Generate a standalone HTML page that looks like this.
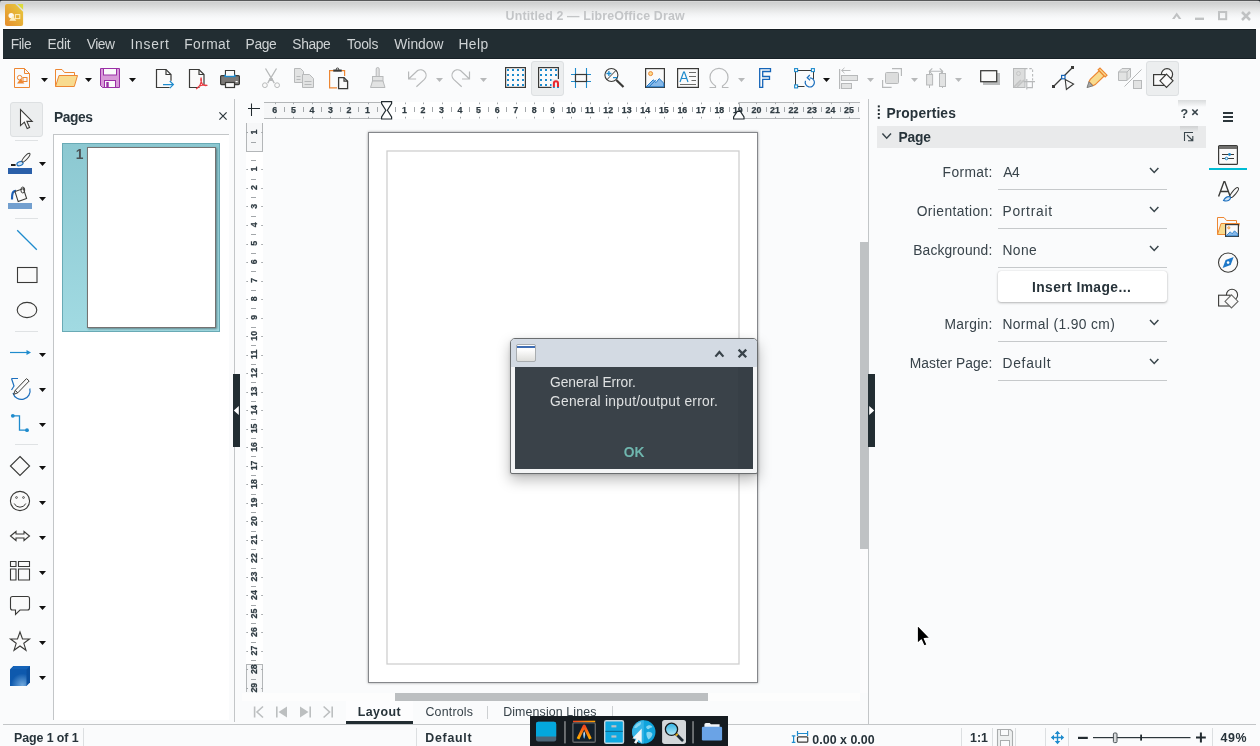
<!DOCTYPE html>
<html lang="en"><head><meta charset="utf-8"><title>Untitled 2 — LibreOffice Draw</title>
<style>
html,body{margin:0;padding:0;}
body{width:1260px;height:746px;overflow:hidden;background:#fafbfc;position:relative;font-family:"Liberation Sans", sans-serif;}
#app{position:absolute;left:0;top:0;width:1260px;height:746px;overflow:hidden;background:#fafbfc;}
#app div{position:absolute;box-sizing:border-box;}
.t{position:absolute;white-space:pre;font-family:"Liberation Sans", sans-serif;}
svg#ov{position:absolute;left:0;top:0;}
svg text{font-family:"Liberation Sans", sans-serif;}
</style></head><body><div id="app">
<div style="left:0px;top:0px;width:1260px;height:30px;background:#20262a;"></div>
<div style="left:0px;top:0px;width:1260px;height:30px;border-radius:3px 3px 0 0;background:linear-gradient(#58595a 0,#58595a 1.300px,#dadada 1px,#cfd0d0 2.500px,#d9dada 6px,#e6e7e7 10px,#f1f2f3 14px,#f8f9fa 18px,#fafbfc 21px,#fafbfc 28px,#ffffff 28px,#ffffff 30px);"></div>
<div style="left:3px;top:29px;width:1253px;height:30px;background:#222d32;"></div>
<div style="left:3px;top:29px;width:1253px;height:1px;background:#161e23;"></div>
<div style="left:3px;top:58px;width:1253px;height:1px;background:#172026;"></div>
<div style="left:3px;top:59px;width:1253px;height:1px;background:#ffffff;"></div>
<div style="left:531px;top:61px;width:33px;height:35px;background:#eceeef;border:1px solid #dde0e2;border-radius:3px;"></div>
<div style="left:1146px;top:61px;width:33px;height:35px;background:#eceeef;border:1px solid #dde0e2;border-radius:3px;"></div>
<div style="left:10px;top:102px;width:33px;height:35px;background:#eceeef;border:1px solid #dde0e2;border-radius:3px;"></div>
<div style="left:15px;top:140px;width:23px;height:1px;background:#dfe2e4;"></div>
<div style="left:15px;top:218px;width:23px;height:1px;background:#dfe2e4;"></div>
<div style="left:15px;top:331px;width:23px;height:1px;background:#dfe2e4;"></div>
<div style="left:15px;top:444px;width:23px;height:1px;background:#dfe2e4;"></div>
<div style="left:8px;top:168px;width:24px;height:6px;background:#2a5fa9;"></div>
<div style="left:8px;top:203px;width:24px;height:6px;background:#729fcf;"></div>
<div style="left:53px;top:134px;width:176px;height:586px;background:#ffffff;border-left:1px solid #c3c6c8;border-top:1px solid #c3c6c8;"></div>
<div style="left:62px;top:143px;width:158px;height:189px;background:linear-gradient(#8cc8d1,#a1dae2);border:1px solid #69aab5;"></div>
<div style="left:87px;top:147px;width:129px;height:181px;background:#ffffff;border:1px solid #757271;box-shadow:1px 1px 2px rgba(0,0,0,.4);"></div>
<div style="left:234px;top:99px;width:1px;height:623px;background:#c3c6c8;"></div>
<div style="left:868px;top:99px;width:1px;height:625px;background:#c3c6c8;"></div>
<div style="left:264px;top:102px;width:122px;height:17px;background:#f6f7f8;border-top:1px solid #b3b6b8;border-bottom:1px solid #b3b6b8;"></div>
<div style="left:386px;top:102px;width:353px;height:17px;background:#ffffff;"></div>
<div style="left:739px;top:102px;width:121px;height:17px;background:#f6f7f8;border-top:1px solid #b3b6b8;border-bottom:1px solid #b3b6b8;border-left:1px solid #b3b6b8;"></div>
<div style="left:246px;top:123px;width:17px;height:29px;background:#f6f7f8;border-left:1px solid #b3b6b8;border-right:1px solid #b3b6b8;border-bottom:1px solid #b3b6b8;"></div>
<div style="left:246px;top:152px;width:17px;height:512px;background:#ffffff;"></div>
<div style="left:246px;top:664px;width:17px;height:28px;background:#f6f7f8;border-left:1px solid #b3b6b8;border-right:1px solid #b3b6b8;border-top:1px solid #b3b6b8;"></div>
<div style="left:368px;top:132px;width:390px;height:551px;background:#ffffff;border:1px solid #85878b;box-shadow:0 0 2.500px rgba(0,0,0,.38);"></div>
<svg style="position:absolute;left:380px;top:145px" width="366" height="526" viewBox="380 145 366 526"><rect x="387" y="151" width="352" height="513" fill="none" stroke="#cfcfcf" stroke-width="1.300"/></svg>
<div style="left:860px;top:99px;width:8px;height:594px;background:#fcfcfd;"></div>
<div style="left:860px;top:242px;width:9px;height:306.5px;background:#bfc2c4;"></div>
<div style="left:242px;top:693px;width:618px;height:8px;background:#fdfdfd;"></div>
<div style="left:395px;top:693px;width:313px;height:8px;background:#bcbfc1;"></div>
<div style="left:346px;top:701px;width:67px;height:23px;background:#fdfdfe;"></div>
<div style="left:346px;top:721px;width:67px;height:3px;background:#222d32;"></div>
<div style="left:487px;top:706px;width:1px;height:13px;background:#cdd0d2;"></div>
<div style="left:612px;top:706px;width:1px;height:13px;background:#cdd0d2;"></div>
<div style="left:3px;top:724px;width:1253px;height:1px;background:#c3c6c8;"></div>
<div style="left:83px;top:728px;width:1px;height:18px;background:#dcdfe1;"></div>
<div style="left:416px;top:728px;width:1px;height:18px;background:#dcdfe1;"></div>
<div style="left:961px;top:728px;width:1px;height:18px;background:#dcdfe1;"></div>
<div style="left:992px;top:728px;width:1px;height:18px;background:#dcdfe1;"></div>
<div style="left:1015px;top:728px;width:1px;height:18px;background:#dcdfe1;"></div>
<div style="left:1045px;top:728px;width:1px;height:18px;background:#dcdfe1;"></div>
<div style="left:1068px;top:728px;width:1px;height:18px;background:#dcdfe1;"></div>
<div style="left:1212px;top:728px;width:1px;height:18px;background:#dcdfe1;"></div>
<div style="left:1178px;top:100px;width:28px;height:7px;background:linear-gradient(#d9dbdc,#fafbfc);"></div>
<div style="left:877px;top:126px;width:329px;height:22px;background:#e9eaeb;"></div>
<div style="left:1180px;top:126px;width:18px;height:6px;background:linear-gradient(#cfd1d2,#e9eaeb);"></div>
<div style="left:998px;top:189px;width:169px;height:1px;background:#c6c9cb;"></div>
<div style="left:998px;top:228px;width:169px;height:1px;background:#c6c9cb;"></div>
<div style="left:998px;top:267px;width:169px;height:1px;background:#c6c9cb;"></div>
<div style="left:998px;top:341px;width:169px;height:1px;background:#c6c9cb;"></div>
<div style="left:998px;top:380px;width:169px;height:1px;background:#c6c9cb;"></div>
<div style="left:998px;top:271px;width:169px;height:31px;background:#ffffff;border-radius:3px;box-shadow:0 1px 2.5px rgba(0,0,0,.28),0 0 1px rgba(0,0,0,.18);"></div>
<div style="left:1209px;top:168px;width:38px;height:2px;background:#00bcd4;"></div>
<div style="left:510px;top:338px;width:248px;height:136px;background:#f4f5f6;border:1px solid #6a6d6f;border-radius:5px 5px 2px 2px;box-shadow:0 6px 14px rgba(0,0,0,.27),0 1px 3px rgba(0,0,0,.14);"></div>
<div style="left:511px;top:339px;width:246px;height:28px;background:#d3dae3;border-radius:4px 4px 0 0;"></div>
<div style="left:515px;top:367px;width:238px;height:102px;background:#3a4249;"></div>
<div style="left:738px;top:367px;width:15px;height:102px;background:#373f46;"></div>
<div style="left:516px;top:344px;width:20px;height:18px;border:1px solid #a9adb0;border-radius:2px;background:linear-gradient(#ffffff 0,#fbfbfb 35%,#dededb 100%);"></div>
<div style="left:517px;top:346px;width:18px;height:2px;background:#3f6db3;"></div>
<div style="left:530px;top:716px;width:198px;height:30px;background:#151b20;"></div>
<div id="fg" style="left:0;top:0;width:1260px;height:746px;will-change:transform;">
<svg id="ov" width="1260" height="746" viewBox="0 0 1260 746">
<g transform="translate(5,4)" ><defs><linearGradient id="lg1" x1="0" y1="1" x2="1" y2="0"><stop offset="0" stop-color="#e58c2c"/><stop offset="1" stop-color="#e8cd3f"/></linearGradient></defs><path d="M2,0 H10.200 L18.100,7.700 V20 a2,2 0 0 1 -2,2 H2 a2,2 0 0 1 -2,-2 V2 a2,2 0 0 1 2,-2z" fill="url(#lg1)"/><path d="M12.200,0 H18.100 V5.800z" fill="#dcdc3c"/><circle cx="6.200" cy="11.600" r="2.700" fill="#fff" opacity=".95"/><path d="M4.300,16.800 l3.500,-5.200 l3.500,5.200z" fill="#fdeec0"/><rect x="10.400" y="10.600" width="4.400" height="4" fill="none" stroke="#fdeec0" stroke-width="1"/></g>
<path d="M1172,19 l4.700,-6.500 l4.700,6.500 h-2.600 l-2.100,-3 l-2.100,3z" fill="#c0c2c3"/>
<rect x="1195" y="17.6" width="9" height="2.4" fill="#c0c2c3"/>
<rect x="1219" y="12" width="7.2" height="7.2" stroke="#c0c2c3" stroke-width="2" fill="none"/>
<path d="M1242,12 l8,8 M1250,12 l-8,8" stroke="#c0c2c3" stroke-width="2.5" fill="none"/>
<g transform="translate(14,68)" ><path d="M0.5,0.5 h10 l5,5 v14 h-15z" stroke="#ed8733" fill="#fafafa" stroke-width="1" /><path d="M10.5,0.5 v5 h5" stroke="#ed8733" fill="none" stroke-width="1" /><circle cx="5.7" cy="9.7" r="2.3" stroke="#ed8733" fill="none"/><rect x="9" y="9.5" width="4" height="4" stroke="#ed8733" fill="#fafafa"/><path d="M3,15.5 l3.7,-5 l3.7,5z" fill="#ed8733"/></g>
<path d="M41,78 h7 l-3.5,4 z" fill="#111"/>
<g transform="translate(55,69)" ><path d="M0.5,17.5 v-17 h6.5 l2.5,3 h10 v3.5" stroke="#ed8733" fill="#fafafa" stroke-width="1" /><path d="M0.5,17.5 l3.5,-11 h18.5 l-3.2,11z" stroke="#ed8733" fill="#f8db8f" stroke-width="1" /></g>
<path d="M85,78 h7 l-3.5,4 z" fill="#111"/>
<g transform="translate(100,68)" ><path d="M0.5,0.5 h19 v19 h-17 l-2,-2z" stroke="#9a30a6" fill="#d89ad8" stroke-width="1" /><rect x="3.5" y="0.5" width="13" height="6.5" fill="#fafafa" stroke="#9a30a6"/><rect x="4.5" y="12.5" width="11" height="7" fill="#fafafa" stroke="#9a30a6"/><rect x="6.3" y="14" width="2.4" height="5.5" fill="#9a30a6"/></g>
<path d="M129,78 h7 l-3.5,4 z" fill="#111"/>
<g transform="translate(156,69)" ><path d="M0.5,0.5 h9.5 l5,5 v13 h-14.5z" stroke="#3a3a38" fill="#fafafa" stroke-width="1.2" /><path d="M10,0.5 v5 h5" stroke="#3a3a38" fill="none" stroke-width="1.2" /><rect x="13.600" y="11.800" width="6" height="8.500" fill="#fafbfc"/><path d="M7,15.6 h10.3 M13.8,12 l3.6,3.6 l-3.6,3.6" stroke="#1e8bcd" fill="none" stroke-width="1.2" /></g>
<g transform="translate(189,69)" ><path d="M0.5,0.5 h9.5 l5,5 v13 h-14.5z" stroke="#3a3a38" fill="#fafafa" stroke-width="1.2" /><path d="M10,0.5 v5 h5" stroke="#3a3a38" fill="none" stroke-width="1.2" /><path d="M9,20.500 l4,-5 l6,1 l-4.500,4z" fill="#fafbfc"/><path d="M12,8.5 c0.8,2.5 0.3,5.5 -1,7.5 c-1,1.8 -2.5,3.2 -4,4 M12,8.5 c-0.6,3 0.3,5.2 1.5,6.6 c1.3,1.4 3,1.8 5,1.2 M7.3,20 c1.5,-2.5 5,-4.5 11,-3.8" stroke="#e8373e" fill="none" stroke-width="1.1" /></g>
<g transform="translate(220,70)" ><rect x="5.5" y="0.6" width="9" height="6" fill="#fafafa" stroke="#3a3a38" stroke-width="1.2"/><rect x="0.6" y="5.6" width="18.8" height="9" rx="1" fill="#7a7876" stroke="#3a3a38" stroke-width="1.2"/><rect x="4.400" y="4.600" width="11.200" height="2.600" fill="#1e8bcd"/><rect x="6" y="1" width="8" height="4.800" fill="#fafafa"/><rect x="5.5" y="12.5" width="9" height="5" fill="#fafafa" stroke="#3a3a38" stroke-width="1.2"/><rect x="15.5" y="11" width="2.2" height="1.2" fill="#fff"/></g>
<g transform="translate(262,68)" ><path d="M3.5,0.5 L12.3,15.2 M14.5,0.5 L5.7,15.2" stroke="#b7b9ba" fill="none" stroke-width="1.3" /><circle cx="2.9" cy="17.2" r="2.4" stroke="#b7b9ba" fill="#fafafa"/><circle cx="15.1" cy="17.2" r="2.4" stroke="#b7b9ba" fill="#fafafa"/><path d="M7.5,10 h3 l1,3 h-5z" fill="#b7b9ba"/></g>
<g transform="translate(294,68)" ><path d="M0.5,0.5 h6 l3,3 v11 h-9z" stroke="#b7b9ba" fill="#e2e3e3" stroke-width="1" /><path d="M2.5,8.5 h4 M2.5,11.5 h4" stroke="#b7b9ba" fill="none" stroke-width="1" /><path d="M8.5,6.5 h7 l4,4 v9 h-11z" stroke="#b7b9ba" fill="#e2e3e3" stroke-width="1" /><path d="M10.5,13.5 h7 M10.5,16.5 h7" stroke="#b7b9ba" fill="none" stroke-width="1" /></g>
<g transform="translate(329,68)" ><path d="M5,2.600 h-4.400 v17.200 h7.400 M12,2.600 h3.600 v5.500" stroke="#ed8733" fill="none" stroke-width="1.2" /><rect x="4.300" y="1.500" width="8.400" height="2.200" fill="#3a3a38"/><circle cx="8.500" cy="1.300" r="1.300" fill="none" stroke="#3a3a38" stroke-width="1"/><path d="M9.6,9.6 h5.4 l3.6,3.6 v7.4 h-9z" stroke="#3a3a38" fill="#fafafa" stroke-width="1.3" /><path d="M15,9.6 v3.6 h3.6" stroke="#3a3a38" fill="none" stroke-width="1.2" /></g>
<g transform="translate(370,67)" ><rect x="6.2" y="0.5" width="3" height="10" rx="1.5" fill="#e2e3e3" stroke="#b7b9ba"/><rect x="2.5" y="9.5" width="10.5" height="4.5" fill="#e2e3e3" stroke="#b7b9ba"/><path d="M2.5,14 L0.5,20.5 h14.5 L13,14z" stroke="#b7b9ba" fill="#e2e3e3" stroke-width="1" /></g>
<path d="M408.6,71.5 v7.5 h7.5 M408.6,79 L417.6,70.6 A5.6,5.6 0 0 1 424.4,79.4 L416.4,86.8" stroke="#b7b9ba" fill="none" stroke-width="1.2" />
<path d="M436,78 h7 l-3.5,4 z" fill="#b7b9ba"/>
<path d="M469.5,71.5 v7.5 h-7.5 M469.5,79 L460.5,70.6 A5.6,5.6 0 0 0 453.7,79.4 L461.7,86.8" stroke="#b7b9ba" fill="none" stroke-width="1.2" />
<path d="M480,78 h7 l-3.5,4 z" fill="#b7b9ba"/>
<g transform="translate(505,67)" ><rect x="0.6" y="0.6" width="19.8" height="19.8" fill="#fafafa" stroke="#3a3a38" stroke-width="1.2"/><rect x="2" y="2" width="2" height="2" fill="#1e8bcd"/><rect x="2" y="7" width="2" height="2" fill="#1e8bcd"/><rect x="2" y="12" width="2" height="2" fill="#1e8bcd"/><rect x="2" y="17" width="2" height="2" fill="#1e8bcd"/><rect x="7" y="2" width="2" height="2" fill="#1e8bcd"/><rect x="7" y="7" width="2" height="2" fill="#1e8bcd"/><rect x="7" y="12" width="2" height="2" fill="#1e8bcd"/><rect x="7" y="17" width="2" height="2" fill="#1e8bcd"/><rect x="12" y="2" width="2" height="2" fill="#1e8bcd"/><rect x="12" y="7" width="2" height="2" fill="#1e8bcd"/><rect x="12" y="12" width="2" height="2" fill="#1e8bcd"/><rect x="12" y="17" width="2" height="2" fill="#1e8bcd"/><rect x="17" y="2" width="2" height="2" fill="#1e8bcd"/><rect x="17" y="7" width="2" height="2" fill="#1e8bcd"/><rect x="17" y="12" width="2" height="2" fill="#1e8bcd"/><rect x="17" y="17" width="2" height="2" fill="#1e8bcd"/></g>
<g transform="translate(538,67)" ><rect x="0.6" y="0.6" width="19.8" height="19.8" fill="#fafafa" stroke="#3a3a38" stroke-width="1.2"/><rect x="2" y="2" width="2" height="2" fill="#1e8bcd"/><rect x="2" y="7" width="2" height="2" fill="#1e8bcd"/><rect x="2" y="12" width="2" height="2" fill="#1e8bcd"/><rect x="2" y="17" width="2" height="2" fill="#1e8bcd"/><rect x="7" y="2" width="2" height="2" fill="#1e8bcd"/><rect x="7" y="7" width="2" height="2" fill="#1e8bcd"/><rect x="7" y="12" width="2" height="2" fill="#1e8bcd"/><rect x="7" y="17" width="2" height="2" fill="#1e8bcd"/><rect x="12" y="2" width="2" height="2" fill="#1e8bcd"/><rect x="12" y="7" width="2" height="2" fill="#1e8bcd"/><rect x="12" y="12" width="2" height="2" fill="#1e8bcd"/><rect x="12" y="17" width="2" height="2" fill="#1e8bcd"/><rect x="17" y="2" width="2" height="2" fill="#1e8bcd"/><rect x="17" y="7" width="2" height="2" fill="#1e8bcd"/><rect x="17" y="12" width="2" height="2" fill="#1e8bcd"/><rect x="17" y="17" width="2" height="2" fill="#1e8bcd"/><rect x="13.5" y="12" width="9" height="10" fill="#eceeef"/><path d="M15.900,20 v-3.600 a2.050,2.050 0 0 1 4.100,0 v3.600" stroke="#e9262d" fill="none" stroke-width="2" /><rect x="14.900" y="20" width="2" height="1" fill="#1e8bcd"/><rect x="19" y="20" width="2" height="1" fill="#1e8bcd"/></g>
<g transform="translate(571,68)" ><path d="M4.5,0 v20 M15.5,0 v20 M0,6.5 h20 M0,13.5 h20" stroke="#1e8bcd" fill="none" stroke-width="1.1" /><rect x="4.5" y="6.5" width="11" height="7" fill="#fafafa" stroke="#3a3a38" stroke-width="1.2"/></g>
<g transform="translate(604,68)" ><circle cx="7.4" cy="7" r="6.5" fill="#fafafa" stroke="#3a3a38" stroke-width="1.1"/><path d="M2.6,12 L12.2,2.2" stroke="#3a3a38" fill="none" stroke-width="1" /><path d="M12.3,12 L19.5,19" stroke="#3a3a38" fill="none" stroke-width="2.2" /><path d="M2.400,5.500 h5 M4.900,3 v5 M9,9.600 h4.400" stroke="#1e8bcd" fill="none" stroke-width="1.3" /></g>
<g transform="translate(645,68)" ><rect x="0.6" y="0.6" width="18.8" height="18.8" fill="#fafafa" stroke="#3a3a38" stroke-width="1.2"/><circle cx="5.6" cy="5.6" r="2" fill="#f8db8f" stroke="#ed8733"/><path d="M1.2,18.8 l7,-7 l2.8,2.8 l3.2,-4 l4.6,4.6 v3.6z" stroke="#1e78c8" fill="#86b8e8" stroke-width="1" /><path d="M4,18.8 l7,-7" stroke="#1e78c8" fill="none" stroke-width="1" /></g>
<g transform="translate(677,68)" ><rect x="0.6" y="0.6" width="20.8" height="18.8" fill="#fafafa" stroke="#3a3a38" stroke-width="1.2"/><path d="M3,14 l3.6,-10 h0.8 l3.6,10 M4.4,10.5 h5.2" stroke="#1e8bcd" fill="none" stroke-width="1.2" /><path d="M12,4.5 h7 M12,8.5 h7 M14.5,12.5 h4.5 M3,16.5 h16" stroke="#6d6d6b" fill="none" stroke-width="1" /></g>
<g transform="translate(709,68)" ><path d="M0.5,19.5 h6 v-1.6 C2.5,15.5 1,12 1,9.3 a9,9 0 0 1 18,0 c0,2.7 -1.5,6.2 -5.5,8.6 v1.6 h6" stroke="#b7b9ba" fill="none" stroke-width="1.2" /></g>
<path d="M738,78 h7 l-3.5,4 z" fill="#b7b9ba"/>
<g transform="translate(759,68)" ><path d="M0.7,0.7 h10.8 v2.8 h-7.8 v5 h6.8 v2.8 h-6.8 v8 h-3z" stroke="#1565b8" fill="#fafafa" stroke-width="1.3" /></g>
<g transform="translate(794,68)" ><path d="M1.500,2.500 h18 v8.500 M1.500,2.500 v16 h9" stroke="#3a3a38" fill="none" stroke-width="1" /><rect x="0.6" y="0.6" width="3" height="3" fill="#fafafa" stroke="#1e8bcd" stroke-width="1.1"/><rect x="17.4" y="0.6" width="3" height="3" fill="#fafafa" stroke="#1e8bcd" stroke-width="1.1"/><rect x="0.600" y="16.900" width="3" height="3" fill="#fafafa" stroke="#1e8bcd" stroke-width="1.100"/><path d="M15.8,9.8 a4.6,4.6 0 1 1 -4.3,3 M15.8,7 l-2.6,2.8 l2.9,2.4" stroke="#1c6fbe" fill="none" stroke-width="1.2" /></g>
<path d="M823,78 h7 l-3.5,4 z" fill="#111"/>
<g transform="translate(839,67)" ><path d="M0.6,2 v20" stroke="#b7b9ba" fill="none" stroke-width="1.2" /><path d="M11.5,3.5 h-9 M5.5,0.8 l-2.8,2.7 l2.8,2.7" stroke="#b7b9ba" fill="none" stroke-width="1" /><rect x="2.5" y="8.5" width="16" height="5" fill="#e2e3e3" stroke="#b7b9ba"/><rect x="2.5" y="16.5" width="10" height="5" fill="#e2e3e3" stroke="#b7b9ba"/></g>
<path d="M867,78 h7 l-3.5,4 z" fill="#b7b9ba"/>
<g transform="translate(882,68)" ><path d="M10,0.6 h9.4 v7.4 M0.6,12 v7.4 h9" stroke="#b7b9ba" fill="none" stroke-width="1.2" /><rect x="3.5" y="4.5" width="13" height="11" rx="1" fill="#dcdddd" stroke="#b7b9ba"/></g>
<path d="M911,78 h7 l-3.5,4 z" fill="#b7b9ba"/>
<g transform="translate(926,68)" ><path d="M3.500,3.300 h13 M6.300,0.300 l-3,3 l3,3 M13.700,0.300 l3,3 l-3,3" stroke="#b7b9ba" fill="none" stroke-width="1.1" /><rect x="0.6" y="6.5" width="6" height="10.5" fill="#e2e3e3" stroke="#b7b9ba"/><rect x="13.5" y="5.5" width="6" height="13" fill="#e2e3e3" stroke="#b7b9ba"/><path d="M3.5,3 v3.5 M3.5,17 v3 M16.5,3 v2.5 M16.5,18.5 v1.5" stroke="#b7b9ba" fill="none" stroke-width="1" /></g>
<path d="M955,78 h7 l-3.5,4 z" fill="#b7b9ba"/>
<g transform="translate(980,70)" ><rect x="3" y="3" width="17" height="12" fill="#b9bbbc"/><rect x="0.700" y="0.700" width="16" height="11" fill="#fafafa" stroke="#3a3a38" stroke-width="1.250"/></g>
<g transform="translate(1013,68)" ><rect x="0.5" y="0.5" width="11.5" height="19" fill="#dcdddd" stroke="#b7b9ba"/><circle cx="5.5" cy="5.5" r="2" fill="none" stroke="#c6c7c7"/><path d="M1,19 l7,-7 M4,19 l7,-7" stroke="#c2c3c3" fill="none" stroke-width="1.6" /><path d="M12,0.6 h7.6 v12" stroke="#b7b9ba" fill="none" stroke-width="1.1" stroke-dasharray="2.5 1.8"/><path d="M13.800,11 v10.400 M10.500,13.600 h11.500 M13.800,19.600 h5.600 v-6" stroke="#b7b9ba" fill="none" stroke-width="1.1" /></g>
<path d="M1053.5,86.5 L1072.5,67.5" stroke="#3a3a38" fill="none" stroke-width="1.2" />
<rect x="1052" y="85" width="3" height="3" fill="#3a3a38"/><rect x="1071" y="66" width="3" height="3" fill="#3a3a38"/>
<rect x="1061.6" y="75.4" width="3.4" height="3.4" fill="#fafafa" stroke="#1565b8" stroke-width="1.2"/>
<path d="M1065.2,79.5 L1073.6,84 L1066.4,89.5z" stroke="#3a3a38" fill="#fafafa" stroke-width="1.1" />
<path d="M1088.990,81.770 L1090.230,79.440 L1099.190,70.730 L1104.210,75.890 L1095.250,84.600 L1092.890,85.770z" stroke="#ed8733" fill="#f8db8f" stroke-width="1.2" /><path d="M1098.210,69.720 L1100,67.980 L1106.980,75.160 L1105.190,76.900z" stroke="#ed8733" fill="#f8db8f" stroke-width="1.2" /><path d="M1087,87.600 L1088.990,81.770 L1092.890,85.770z" stroke="#7c7c7a" fill="#a9a9a7" stroke-width="1" />
<g transform="translate(1118,67)" ><path d="M0.5,5 l3.5,-3.5 h8.5 v8.5 l-3.5,3.5 h-8.5z" stroke="#b7b9ba" fill="#e2e3e3" stroke-width="1" /><path d="M0.5,5 h8.5 v8.5 M9,5 l3.5,-3.5" stroke="#b7b9ba" fill="none" stroke-width="1" /><path d="M6.5,19.5 L23.5,2.5" stroke="#b7b9ba" fill="none" stroke-width="1" /><rect x="15.5" y="13.5" width="8" height="8" fill="#e2e3e3" stroke="#b7b9ba"/></g>
<g transform="translate(1153,68)" ><circle cx="14" cy="6.3" r="5.6" fill="#fafafa" stroke="#3a3a38" stroke-width="1.2"/><rect x="0.6" y="6.6" width="11.5" height="10.8" fill="#fafafa" stroke="#3a3a38" stroke-width="1.2"/><path d="M13.5,6.2 L20,12.8 L13.5,19.4 L7,12.8z" stroke="#3a3a38" fill="#fafafa" stroke-width="1.2" /></g>
<path d="M20.5,109.6 V125.6 L24.4,122.2 L27.2,128.6 L29.6,127.5 L26.9,121.4 H32.2z" stroke="#3a3a38" fill="#fafafa" stroke-width="1.1" />
<rect x="11" y="164" width="4.6" height="2" fill="#222"/>
<ellipse cx="20" cy="163.6" rx="3.2" ry="2" fill="#cfe3f5" stroke="#1c6fbe" stroke-width="1.1" transform="rotate(-20 20 163.6)"/>
<ellipse cx="26" cy="157.6" rx="5.6" ry="1.7" fill="#fafafa" stroke="#3a3a38" stroke-width="1" transform="rotate(-48 26 157.6)"/>
<path d="M39,162 h7 l-3.5,4 z" fill="#111"/>
<path d="M12,199.5 c0,-5.5 0.3,-8.6 4,-8.6" stroke="#1c5fb5" fill="none" stroke-width="2.2" />
<path d="M15,191.6 L23.4,188.6 L26.6,198.4 L18.2,201.6z" stroke="#3a3a38" fill="#fafafa" stroke-width="1.1" />
<ellipse cx="22.800" cy="190" rx="1.900" ry="3" fill="none" stroke="#3a3a38" stroke-width="1"/>
<path d="M39,197 h7 l-3.5,4 z" fill="#111"/>
<path d="M17.2,230.2 L36.8,249.8" stroke="#1e8bcd" fill="none" stroke-width="1.3" />
<rect x="17.5" y="267.5" width="19.5" height="15" fill="#fafafa" stroke="#3a3a38" stroke-width="1.1"/>
<ellipse cx="27" cy="310" rx="9.8" ry="7.6" fill="#fafafa" stroke="#3a3a38" stroke-width="1.1"/>
<path d="M10,352.5 h18" stroke="#1e8bcd" fill="none" stroke-width="1.2" /><path d="M26.5,350 l4.5,2.5 l-4.5,2.5z" fill="#1e8bcd"/>
<path d="M39,353 h7 l-3.5,4 z" fill="#111"/>
<path d="M11.5,378.5 h6.5 M11.5,378.5 l2.5,7.5 l-2.5,4 M13,393 a8,8 0 0 0 16.8,-4.5" stroke="#1c6fbe" fill="none" stroke-width="1.2" />
<path d="M13.600,394.400 L15.200,390.400 L26.500,378.600 L29.200,381 L17.800,392.800z M15.200,390.400 l2.600,2.400" stroke="#3a3a38" fill="#fafafa" stroke-width="1" />
<path d="M39,388 h7 l-3.5,4 z" fill="#111"/>
<path d="M12.8,415.8 h6.7 v14.4 h7.5" stroke="#1e8bcd" fill="none" stroke-width="1.3" /><circle cx="12.8" cy="415.8" r="1.9" fill="#1e8bcd"/><circle cx="27" cy="430.2" r="1.9" fill="#1e8bcd"/>
<path d="M39,423 h7 l-3.5,4 z" fill="#111"/>
<path d="M20,456.5 L29.6,466 L20,475.5 L10.4,466z" stroke="#3a3a38" fill="#fafafa" stroke-width="1.1" />
<path d="M39,466 h7 l-3.5,4 z" fill="#111"/>
<circle cx="20" cy="501" r="9.6" fill="#fafafa" stroke="#3a3a38" stroke-width="1.1"/><circle cx="16.5" cy="497.5" r="0.9" fill="none" stroke="#3a3a38" stroke-width=".8"/><circle cx="23.5" cy="497.5" r="0.9" fill="none" stroke="#3a3a38" stroke-width=".8"/><path d="M14.2,503.5 a6.4,6.4 0 0 0 11.6,0" stroke="#3a3a38" fill="none" stroke-width="1" />
<path d="M39,501 h7 l-3.5,4 z" fill="#111"/>
<path d="M10.5,536 L16,531.5 V534 H24 V531.5 L29.5,536 L24,540.5 V538 H16 V540.5z" stroke="#3a3a38" fill="#fafafa" stroke-width="1.1" />
<path d="M39,536 h7 l-3.5,4 z" fill="#111"/>
<path d="M10.5,561.5 h5.5 v5 h-5.5z M18.5,561.5 h11 v5 h-11z M10.5,569 h5.5 v11 h-5.5z M18.5,569 h11 v11 h-11z" stroke="#3a3a38" fill="#fafafa" stroke-width="1.1" />
<path d="M39,571 h7 l-3.5,4 z" fill="#111"/>
<path d="M12.5,596.5 h15 a2,2 0 0 1 2,2 v9.500 a2,2 0 0 1 -2,2 h-7.5 l-4.500,4.500 v-4.500 h-3 a2,2 0 0 1 -2,-2 v-9.500 a2,2 0 0 1 2,-2z" stroke="#3a3a38" fill="#fafafa" stroke-width="1.1" />
<path d="M39,606 h7 l-3.5,4 z" fill="#111"/>
<path d="M20,632 l2.5,7 h7 l-5.700,4.300 l2.200,7 l-6,-4.300 l-6,4.300 l2.200,-7 l-5.700,-4.300 h7z" stroke="#3a3a38" fill="#fafafa" stroke-width="1.1" />
<path d="M39,641 h7 l-3.5,4 z" fill="#111"/>
<defs><radialGradient id="rg1" cx=".75" cy=".95" r=".7"><stop offset="0" stop-color="#6fa8dd"/><stop offset="1" stop-color="#0e59ad"/></radialGradient></defs><path d="M10,669.5 l3.500,-3.500 h16.500 v16.500 l-3.500,3.500 h-16.500z" fill="#0b4f9e"/><path d="M10,669.500 h16.500 v16.500 h-16.500z" fill="url(#rg1)"/><path d="M10,669.500 l3.500,-3.500 h16.500 l-3.500,3.500z" fill="#1563b8"/>
<path d="M39,676 h7 l-3.5,4 z" fill="#111"/>
<path d="M219.4,112.4 l7.200,7.200 M226.600,112.400 l-7.200,7.200" stroke="#2c363b" fill="none" stroke-width="1.2" />
<rect x="233" y="374" width="7" height="73" fill="#222d32"/><path d="M238.800,406 v9 l-5,-4.500z" fill="#fff"/>
<rect x="868" y="374" width="7" height="73" fill="#222d32"/><path d="M869.200,406 v9 l5,-4.500z" fill="#fff"/>
<path d="M248,108.500 h12 M251.500,103.500 v12.500" stroke="#222b30" fill="none" stroke-width="1.05" />
<text x="274.8" y="113" text-anchor="middle" font-size="8.8" font-weight="700" fill="#2f3b42" stroke="#2f3b42" stroke-width=".25">6</text><path d="M275.5,102.500 v1.700 M275.5,116.800 v1.700" stroke="#a3a7aa" stroke-width="1"/><path d="M284.5,107 v5" stroke="#a3a7aa" stroke-width="1"/><text x="293.4" y="113" text-anchor="middle" font-size="8.8" font-weight="700" fill="#2f3b42" stroke="#2f3b42" stroke-width=".25">5</text><path d="M293.5,102.500 v1.700 M293.5,116.800 v1.700" stroke="#a3a7aa" stroke-width="1"/><path d="M303.5,107 v5" stroke="#a3a7aa" stroke-width="1"/><text x="311.9" y="113" text-anchor="middle" font-size="8.8" font-weight="700" fill="#2f3b42" stroke="#2f3b42" stroke-width=".25">4</text><path d="M312.5,102.500 v1.700 M312.5,116.800 v1.700" stroke="#a3a7aa" stroke-width="1"/><path d="M321.5,107 v5" stroke="#a3a7aa" stroke-width="1"/><text x="330.4" y="113" text-anchor="middle" font-size="8.8" font-weight="700" fill="#2f3b42" stroke="#2f3b42" stroke-width=".25">3</text><path d="M330.5,102.500 v1.700 M330.5,116.800 v1.700" stroke="#a3a7aa" stroke-width="1"/><path d="M340.5,107 v5" stroke="#a3a7aa" stroke-width="1"/><text x="348.9" y="113" text-anchor="middle" font-size="8.8" font-weight="700" fill="#2f3b42" stroke="#2f3b42" stroke-width=".25">2</text><path d="M349.5,102.500 v1.700 M349.5,116.800 v1.700" stroke="#a3a7aa" stroke-width="1"/><path d="M358.5,107 v5" stroke="#a3a7aa" stroke-width="1"/><text x="367.4" y="113" text-anchor="middle" font-size="8.8" font-weight="700" fill="#2f3b42" stroke="#2f3b42" stroke-width=".25">1</text><path d="M368.5,102.500 v1.700 M368.5,116.800 v1.700" stroke="#a3a7aa" stroke-width="1"/><path d="M377.5,107 v5" stroke="#a3a7aa" stroke-width="1"/><path d="M395.5,107 v5" stroke="#a3a7aa" stroke-width="1"/><text x="404.5" y="113" text-anchor="middle" font-size="8.8" font-weight="700" fill="#2f3b42" stroke="#2f3b42" stroke-width=".25">1</text><path d="M405.5,102.500 v1.700 M405.5,116.800 v1.700" stroke="#a3a7aa" stroke-width="1"/><path d="M414.5,107 v5" stroke="#a3a7aa" stroke-width="1"/><text x="423.0" y="113" text-anchor="middle" font-size="8.8" font-weight="700" fill="#2f3b42" stroke="#2f3b42" stroke-width=".25">2</text><path d="M423.5,102.500 v1.700 M423.5,116.800 v1.700" stroke="#a3a7aa" stroke-width="1"/><path d="M432.5,107 v5" stroke="#a3a7aa" stroke-width="1"/><text x="441.5" y="113" text-anchor="middle" font-size="8.8" font-weight="700" fill="#2f3b42" stroke="#2f3b42" stroke-width=".25">3</text><path d="M442.5,102.500 v1.700 M442.5,116.800 v1.700" stroke="#a3a7aa" stroke-width="1"/><path d="M451.5,107 v5" stroke="#a3a7aa" stroke-width="1"/><text x="460.0" y="113" text-anchor="middle" font-size="8.8" font-weight="700" fill="#2f3b42" stroke="#2f3b42" stroke-width=".25">4</text><path d="M460.5,102.500 v1.700 M460.5,116.800 v1.700" stroke="#a3a7aa" stroke-width="1"/><path d="M469.5,107 v5" stroke="#a3a7aa" stroke-width="1"/><text x="478.5" y="113" text-anchor="middle" font-size="8.8" font-weight="700" fill="#2f3b42" stroke="#2f3b42" stroke-width=".25">5</text><path d="M479.5,102.500 v1.700 M479.5,116.800 v1.700" stroke="#a3a7aa" stroke-width="1"/><path d="M488.5,107 v5" stroke="#a3a7aa" stroke-width="1"/><text x="497.1" y="113" text-anchor="middle" font-size="8.8" font-weight="700" fill="#2f3b42" stroke="#2f3b42" stroke-width=".25">6</text><path d="M497.5,102.500 v1.700 M497.5,116.800 v1.700" stroke="#a3a7aa" stroke-width="1"/><path d="M506.5,107 v5" stroke="#a3a7aa" stroke-width="1"/><text x="515.6" y="113" text-anchor="middle" font-size="8.8" font-weight="700" fill="#2f3b42" stroke="#2f3b42" stroke-width=".25">7</text><path d="M516.5,102.500 v1.700 M516.5,116.800 v1.700" stroke="#a3a7aa" stroke-width="1"/><path d="M525.5,107 v5" stroke="#a3a7aa" stroke-width="1"/><text x="534.1" y="113" text-anchor="middle" font-size="8.8" font-weight="700" fill="#2f3b42" stroke="#2f3b42" stroke-width=".25">8</text><path d="M534.5,102.500 v1.700 M534.5,116.800 v1.700" stroke="#a3a7aa" stroke-width="1"/><path d="M543.5,107 v5" stroke="#a3a7aa" stroke-width="1"/><text x="552.6" y="113" text-anchor="middle" font-size="8.8" font-weight="700" fill="#2f3b42" stroke="#2f3b42" stroke-width=".25">9</text><path d="M553.5,102.500 v1.700 M553.5,116.800 v1.700" stroke="#a3a7aa" stroke-width="1"/><path d="M562.5,107 v5" stroke="#a3a7aa" stroke-width="1"/><text x="571.1" y="113" text-anchor="middle" font-size="8.8" font-weight="700" fill="#2f3b42" stroke="#2f3b42" stroke-width=".25">10</text><path d="M571.5,102.500 v1.700 M571.5,116.800 v1.700" stroke="#a3a7aa" stroke-width="1"/><path d="M581.5,107 v5" stroke="#a3a7aa" stroke-width="1"/><text x="589.7" y="113" text-anchor="middle" font-size="8.8" font-weight="700" fill="#2f3b42" stroke="#2f3b42" stroke-width=".25">11</text><path d="M590.5,102.500 v1.700 M590.5,116.800 v1.700" stroke="#a3a7aa" stroke-width="1"/><path d="M599.5,107 v5" stroke="#a3a7aa" stroke-width="1"/><text x="608.2" y="113" text-anchor="middle" font-size="8.8" font-weight="700" fill="#2f3b42" stroke="#2f3b42" stroke-width=".25">12</text><path d="M608.5,102.500 v1.700 M608.5,116.800 v1.700" stroke="#a3a7aa" stroke-width="1"/><path d="M618.5,107 v5" stroke="#a3a7aa" stroke-width="1"/><text x="626.7" y="113" text-anchor="middle" font-size="8.8" font-weight="700" fill="#2f3b42" stroke="#2f3b42" stroke-width=".25">13</text><path d="M627.5,102.500 v1.700 M627.5,116.800 v1.700" stroke="#a3a7aa" stroke-width="1"/><path d="M636.5,107 v5" stroke="#a3a7aa" stroke-width="1"/><text x="645.2" y="113" text-anchor="middle" font-size="8.8" font-weight="700" fill="#2f3b42" stroke="#2f3b42" stroke-width=".25">14</text><path d="M645.5,102.500 v1.700 M645.5,116.800 v1.700" stroke="#a3a7aa" stroke-width="1"/><path d="M655.5,107 v5" stroke="#a3a7aa" stroke-width="1"/><text x="663.8" y="113" text-anchor="middle" font-size="8.8" font-weight="700" fill="#2f3b42" stroke="#2f3b42" stroke-width=".25">15</text><path d="M664.5,102.500 v1.700 M664.5,116.800 v1.700" stroke="#a3a7aa" stroke-width="1"/><path d="M673.5,107 v5" stroke="#a3a7aa" stroke-width="1"/><text x="682.3" y="113" text-anchor="middle" font-size="8.8" font-weight="700" fill="#2f3b42" stroke="#2f3b42" stroke-width=".25">16</text><path d="M682.5,102.500 v1.700 M682.5,116.800 v1.700" stroke="#a3a7aa" stroke-width="1"/><path d="M692.5,107 v5" stroke="#a3a7aa" stroke-width="1"/><text x="700.8" y="113" text-anchor="middle" font-size="8.8" font-weight="700" fill="#2f3b42" stroke="#2f3b42" stroke-width=".25">17</text><path d="M701.5,102.500 v1.700 M701.5,116.800 v1.700" stroke="#a3a7aa" stroke-width="1"/><path d="M710.5,107 v5" stroke="#a3a7aa" stroke-width="1"/><text x="719.3" y="113" text-anchor="middle" font-size="8.8" font-weight="700" fill="#2f3b42" stroke="#2f3b42" stroke-width=".25">18</text><path d="M719.5,102.500 v1.700 M719.5,116.800 v1.700" stroke="#a3a7aa" stroke-width="1"/><path d="M729.5,107 v5" stroke="#a3a7aa" stroke-width="1"/><text x="737.8" y="113" text-anchor="middle" font-size="8.8" font-weight="700" fill="#2f3b42" stroke="#2f3b42" stroke-width=".25">19</text><path d="M738.5,102.500 v1.700 M738.5,116.800 v1.700" stroke="#a3a7aa" stroke-width="1"/><path d="M747.5,107 v5" stroke="#a3a7aa" stroke-width="1"/><text x="756.4" y="113" text-anchor="middle" font-size="8.8" font-weight="700" fill="#2f3b42" stroke="#2f3b42" stroke-width=".25">20</text><path d="M756.5,102.500 v1.700 M756.5,116.800 v1.700" stroke="#a3a7aa" stroke-width="1"/><path d="M766.5,107 v5" stroke="#a3a7aa" stroke-width="1"/><text x="774.9" y="113" text-anchor="middle" font-size="8.8" font-weight="700" fill="#2f3b42" stroke="#2f3b42" stroke-width=".25">21</text><path d="M775.5,102.500 v1.700 M775.5,116.800 v1.700" stroke="#a3a7aa" stroke-width="1"/><path d="M784.5,107 v5" stroke="#a3a7aa" stroke-width="1"/><text x="793.4" y="113" text-anchor="middle" font-size="8.8" font-weight="700" fill="#2f3b42" stroke="#2f3b42" stroke-width=".25">22</text><path d="M793.5,102.500 v1.700 M793.5,116.800 v1.700" stroke="#a3a7aa" stroke-width="1"/><path d="M803.5,107 v5" stroke="#a3a7aa" stroke-width="1"/><text x="811.9" y="113" text-anchor="middle" font-size="8.8" font-weight="700" fill="#2f3b42" stroke="#2f3b42" stroke-width=".25">23</text><path d="M812.5,102.500 v1.700 M812.5,116.800 v1.700" stroke="#a3a7aa" stroke-width="1"/><path d="M821.5,107 v5" stroke="#a3a7aa" stroke-width="1"/><text x="830.4" y="113" text-anchor="middle" font-size="8.8" font-weight="700" fill="#2f3b42" stroke="#2f3b42" stroke-width=".25">24</text><path d="M831.5,102.500 v1.700 M831.5,116.800 v1.700" stroke="#a3a7aa" stroke-width="1"/><path d="M840.5,107 v5" stroke="#a3a7aa" stroke-width="1"/><text x="848.9" y="113" text-anchor="middle" font-size="8.8" font-weight="700" fill="#2f3b42" stroke="#2f3b42" stroke-width=".25">25</text><path d="M849.5,102.500 v1.700 M849.5,116.800 v1.700" stroke="#a3a7aa" stroke-width="1"/><path d="M858.5,107 v5" stroke="#a3a7aa" stroke-width="1"/>
<path d="M381.600,101.600 h10 v2 l-4.200,6.700 l4.200,6.700 v2 h-10 v-2 l4.200,-6.700 l-4.200,-6.700z" stroke="#222b30" fill="#ffffff" stroke-width="1.2" />
<path d="M733.600,119 v-2 l3.600,-5.600 h3.200 l3.600,5.600 v2z" stroke="#222b30" fill="#ffffff" stroke-width="1.2" />
<text transform="translate(257.200,132.1) rotate(-90)" text-anchor="middle" font-size="8.8" font-weight="700" fill="#2f3b42" stroke="#2f3b42" stroke-width=".25">1</text><path d="M246.300,132.5 h1.700 M261.200,132.5 h1.700" stroke="#a3a7aa" stroke-width="1"/><path d="M251,142.5 h5" stroke="#a3a7aa" stroke-width="1"/><path d="M251,160.5 h5" stroke="#a3a7aa" stroke-width="1"/><text transform="translate(257.200,169.1) rotate(-90)" text-anchor="middle" font-size="8.8" font-weight="700" fill="#2f3b42" stroke="#2f3b42" stroke-width=".25">1</text><path d="M246.300,169.5 h1.700 M261.200,169.5 h1.700" stroke="#a3a7aa" stroke-width="1"/><path d="M251,179.5 h5" stroke="#a3a7aa" stroke-width="1"/><text transform="translate(257.200,187.6) rotate(-90)" text-anchor="middle" font-size="8.8" font-weight="700" fill="#2f3b42" stroke="#2f3b42" stroke-width=".25">2</text><path d="M246.300,188.5 h1.700 M261.200,188.5 h1.700" stroke="#a3a7aa" stroke-width="1"/><path d="M251,197.5 h5" stroke="#a3a7aa" stroke-width="1"/><text transform="translate(257.200,206.2) rotate(-90)" text-anchor="middle" font-size="8.8" font-weight="700" fill="#2f3b42" stroke="#2f3b42" stroke-width=".25">3</text><path d="M246.300,206.5 h1.700 M261.200,206.5 h1.700" stroke="#a3a7aa" stroke-width="1"/><path d="M251,216.5 h5" stroke="#a3a7aa" stroke-width="1"/><text transform="translate(257.200,224.7) rotate(-90)" text-anchor="middle" font-size="8.8" font-weight="700" fill="#2f3b42" stroke="#2f3b42" stroke-width=".25">4</text><path d="M246.300,225.5 h1.700 M261.200,225.5 h1.700" stroke="#a3a7aa" stroke-width="1"/><path d="M251,234.5 h5" stroke="#a3a7aa" stroke-width="1"/><text transform="translate(257.200,243.2) rotate(-90)" text-anchor="middle" font-size="8.8" font-weight="700" fill="#2f3b42" stroke="#2f3b42" stroke-width=".25">5</text><path d="M246.300,244.5 h1.700 M261.200,244.5 h1.700" stroke="#a3a7aa" stroke-width="1"/><path d="M251,253.5 h5" stroke="#a3a7aa" stroke-width="1"/><text transform="translate(257.200,261.7) rotate(-90)" text-anchor="middle" font-size="8.8" font-weight="700" fill="#2f3b42" stroke="#2f3b42" stroke-width=".25">6</text><path d="M246.300,262.5 h1.700 M261.200,262.5 h1.700" stroke="#a3a7aa" stroke-width="1"/><path d="M251,271.5 h5" stroke="#a3a7aa" stroke-width="1"/><text transform="translate(257.200,280.2) rotate(-90)" text-anchor="middle" font-size="8.8" font-weight="700" fill="#2f3b42" stroke="#2f3b42" stroke-width=".25">7</text><path d="M246.300,281.5 h1.700 M261.200,281.5 h1.700" stroke="#a3a7aa" stroke-width="1"/><path d="M251,290.5 h5" stroke="#a3a7aa" stroke-width="1"/><text transform="translate(257.200,298.8) rotate(-90)" text-anchor="middle" font-size="8.8" font-weight="700" fill="#2f3b42" stroke="#2f3b42" stroke-width=".25">8</text><path d="M246.300,299.5 h1.700 M261.200,299.5 h1.700" stroke="#a3a7aa" stroke-width="1"/><path d="M251,308.5 h5" stroke="#a3a7aa" stroke-width="1"/><text transform="translate(257.200,317.3) rotate(-90)" text-anchor="middle" font-size="8.8" font-weight="700" fill="#2f3b42" stroke="#2f3b42" stroke-width=".25">9</text><path d="M246.300,318.5 h1.700 M261.200,318.5 h1.700" stroke="#a3a7aa" stroke-width="1"/><path d="M251,327.5 h5" stroke="#a3a7aa" stroke-width="1"/><text transform="translate(257.200,335.8) rotate(-90)" text-anchor="middle" font-size="8.8" font-weight="700" fill="#2f3b42" stroke="#2f3b42" stroke-width=".25">10</text><path d="M246.300,336.5 h1.700 M261.200,336.5 h1.700" stroke="#a3a7aa" stroke-width="1"/><path d="M251,345.5 h5" stroke="#a3a7aa" stroke-width="1"/><text transform="translate(257.200,354.3) rotate(-90)" text-anchor="middle" font-size="8.8" font-weight="700" fill="#2f3b42" stroke="#2f3b42" stroke-width=".25">11</text><path d="M246.300,355.5 h1.700 M261.200,355.5 h1.700" stroke="#a3a7aa" stroke-width="1"/><path d="M251,364.5 h5" stroke="#a3a7aa" stroke-width="1"/><text transform="translate(257.200,372.8) rotate(-90)" text-anchor="middle" font-size="8.8" font-weight="700" fill="#2f3b42" stroke="#2f3b42" stroke-width=".25">12</text><path d="M246.300,373.5 h1.700 M261.200,373.5 h1.700" stroke="#a3a7aa" stroke-width="1"/><path d="M251,382.5 h5" stroke="#a3a7aa" stroke-width="1"/><text transform="translate(257.200,391.4) rotate(-90)" text-anchor="middle" font-size="8.8" font-weight="700" fill="#2f3b42" stroke="#2f3b42" stroke-width=".25">13</text><path d="M246.300,392.5 h1.700 M261.200,392.5 h1.700" stroke="#a3a7aa" stroke-width="1"/><path d="M251,401.5 h5" stroke="#a3a7aa" stroke-width="1"/><text transform="translate(257.200,409.9) rotate(-90)" text-anchor="middle" font-size="8.8" font-weight="700" fill="#2f3b42" stroke="#2f3b42" stroke-width=".25">14</text><path d="M246.300,410.5 h1.700 M261.200,410.5 h1.700" stroke="#a3a7aa" stroke-width="1"/><path d="M251,419.5 h5" stroke="#a3a7aa" stroke-width="1"/><text transform="translate(257.200,428.4) rotate(-90)" text-anchor="middle" font-size="8.8" font-weight="700" fill="#2f3b42" stroke="#2f3b42" stroke-width=".25">15</text><path d="M246.300,429.5 h1.700 M261.200,429.5 h1.700" stroke="#a3a7aa" stroke-width="1"/><path d="M251,438.5 h5" stroke="#a3a7aa" stroke-width="1"/><text transform="translate(257.200,446.9) rotate(-90)" text-anchor="middle" font-size="8.8" font-weight="700" fill="#2f3b42" stroke="#2f3b42" stroke-width=".25">16</text><path d="M246.300,447.5 h1.700 M261.200,447.5 h1.700" stroke="#a3a7aa" stroke-width="1"/><path d="M251,456.5 h5" stroke="#a3a7aa" stroke-width="1"/><text transform="translate(257.200,465.4) rotate(-90)" text-anchor="middle" font-size="8.8" font-weight="700" fill="#2f3b42" stroke="#2f3b42" stroke-width=".25">17</text><path d="M246.300,466.5 h1.700 M261.200,466.5 h1.700" stroke="#a3a7aa" stroke-width="1"/><path d="M251,475.5 h5" stroke="#a3a7aa" stroke-width="1"/><text transform="translate(257.200,484.0) rotate(-90)" text-anchor="middle" font-size="8.8" font-weight="700" fill="#2f3b42" stroke="#2f3b42" stroke-width=".25">18</text><path d="M246.300,484.5 h1.700 M261.200,484.5 h1.700" stroke="#a3a7aa" stroke-width="1"/><path d="M251,494.5 h5" stroke="#a3a7aa" stroke-width="1"/><text transform="translate(257.200,502.5) rotate(-90)" text-anchor="middle" font-size="8.8" font-weight="700" fill="#2f3b42" stroke="#2f3b42" stroke-width=".25">19</text><path d="M246.300,503.5 h1.700 M261.200,503.5 h1.700" stroke="#a3a7aa" stroke-width="1"/><path d="M251,512.5 h5" stroke="#a3a7aa" stroke-width="1"/><text transform="translate(257.200,521.0) rotate(-90)" text-anchor="middle" font-size="8.8" font-weight="700" fill="#2f3b42" stroke="#2f3b42" stroke-width=".25">20</text><path d="M246.300,521.5 h1.700 M261.200,521.5 h1.700" stroke="#a3a7aa" stroke-width="1"/><path d="M251,531.5 h5" stroke="#a3a7aa" stroke-width="1"/><text transform="translate(257.200,539.5) rotate(-90)" text-anchor="middle" font-size="8.8" font-weight="700" fill="#2f3b42" stroke="#2f3b42" stroke-width=".25">21</text><path d="M246.300,540.5 h1.700 M261.200,540.5 h1.700" stroke="#a3a7aa" stroke-width="1"/><path d="M251,549.5 h5" stroke="#a3a7aa" stroke-width="1"/><text transform="translate(257.200,558.0) rotate(-90)" text-anchor="middle" font-size="8.8" font-weight="700" fill="#2f3b42" stroke="#2f3b42" stroke-width=".25">22</text><path d="M246.300,558.5 h1.700 M261.200,558.5 h1.700" stroke="#a3a7aa" stroke-width="1"/><path d="M251,568.5 h5" stroke="#a3a7aa" stroke-width="1"/><text transform="translate(257.200,576.6) rotate(-90)" text-anchor="middle" font-size="8.8" font-weight="700" fill="#2f3b42" stroke="#2f3b42" stroke-width=".25">23</text><path d="M246.300,577.5 h1.700 M261.200,577.5 h1.700" stroke="#a3a7aa" stroke-width="1"/><path d="M251,586.5 h5" stroke="#a3a7aa" stroke-width="1"/><text transform="translate(257.200,595.1) rotate(-90)" text-anchor="middle" font-size="8.8" font-weight="700" fill="#2f3b42" stroke="#2f3b42" stroke-width=".25">24</text><path d="M246.300,595.5 h1.700 M261.200,595.5 h1.700" stroke="#a3a7aa" stroke-width="1"/><path d="M251,605.5 h5" stroke="#a3a7aa" stroke-width="1"/><text transform="translate(257.200,613.6) rotate(-90)" text-anchor="middle" font-size="8.8" font-weight="700" fill="#2f3b42" stroke="#2f3b42" stroke-width=".25">25</text><path d="M246.300,614.5 h1.700 M261.200,614.5 h1.700" stroke="#a3a7aa" stroke-width="1"/><path d="M251,623.5 h5" stroke="#a3a7aa" stroke-width="1"/><text transform="translate(257.200,632.1) rotate(-90)" text-anchor="middle" font-size="8.8" font-weight="700" fill="#2f3b42" stroke="#2f3b42" stroke-width=".25">26</text><path d="M246.300,632.5 h1.700 M261.200,632.5 h1.700" stroke="#a3a7aa" stroke-width="1"/><path d="M251,642.5 h5" stroke="#a3a7aa" stroke-width="1"/><text transform="translate(257.200,650.6) rotate(-90)" text-anchor="middle" font-size="8.8" font-weight="700" fill="#2f3b42" stroke="#2f3b42" stroke-width=".25">27</text><path d="M246.300,651.5 h1.700 M261.200,651.5 h1.700" stroke="#a3a7aa" stroke-width="1"/><path d="M251,660.5 h5" stroke="#a3a7aa" stroke-width="1"/><text transform="translate(257.200,669.2) rotate(-90)" text-anchor="middle" font-size="8.8" font-weight="700" fill="#2f3b42" stroke="#2f3b42" stroke-width=".25">28</text><path d="M246.300,669.5 h1.700 M261.200,669.5 h1.700" stroke="#a3a7aa" stroke-width="1"/><path d="M251,679.5 h5" stroke="#a3a7aa" stroke-width="1"/><text transform="translate(257.200,687.7) rotate(-90)" text-anchor="middle" font-size="8.8" font-weight="700" fill="#2f3b42" stroke="#2f3b42" stroke-width=".25">29</text><path d="M246.300,688.5 h1.700 M261.200,688.5 h1.700" stroke="#a3a7aa" stroke-width="1"/>
<path d="M254.600,706.500 v11 M263,706.500 l-6,5.500 l6,5.500" stroke="#bcbfc0" fill="none" stroke-width="1.6" />
<rect x="276" y="706.500" width="1.600" height="11" fill="#bcbfc0"/><path d="M287,706.500 v11 l-8.500,-5.500z" fill="#bcbfc0"/>
<rect x="309.400" y="706.500" width="1.600" height="11" fill="#bcbfc0"/><path d="M300,706.500 v11 l8.500,-5.500z" fill="#bcbfc0"/>
<path d="M332.200,706.500 v11 M323.600,706.500 l6,5.500 l-6,5.500" stroke="#bcbfc0" fill="none" stroke-width="1.6" />
<path d="M797.500,731 v5 M807.600,731 v5 M797.500,733.500 h10 M793.600,735.800 v6.600 M791.800,735.800 h3.600 M791.800,742.400 h3.600" stroke="#1e8bcd" fill="none" stroke-width="1.2" />
<rect x="797.500" y="736.800" width="10.300" height="5.400" rx="1" fill="#fafafa" stroke="#3a3a38" stroke-width="1.200"/>
<path d="M997.500,729.500 h13 l2,2 v15 h-15z" stroke="#aaadae" fill="#eef0f0" stroke-width="1.1" /><rect x="1000.500" y="729.500" width="8" height="6" fill="#fafbfc" stroke="#aaadae"/><rect x="1000.500" y="740.500" width="9" height="6" fill="#fafbfc" stroke="#aaadae"/>
<path d="M1057.500,732.500 v10 M1052.500,737.500 h10" stroke="#1e8bcd" fill="none" stroke-width="1.4" /><path d="M1057.500,730.800 l2.800,3.200 h-5.600z M1057.500,744.200 l2.800,-3.200 h-5.600z M1050.800,737.500 l3.200,-2.800 v5.600z M1064.200,737.500 l-3.200,-2.800 v5.600z" fill="#1e8bcd"/>
<rect x="1078" y="736.800" width="9.800" height="2.200" fill="#222b30"/>
<rect x="1093" y="737" width="97.500" height="1.200" fill="#2c363b"/>
<rect x="1140.200" y="734.600" width="1.800" height="6" fill="#222b30"/>
<rect x="1113.400" y="733" width="3.600" height="9.600" rx="1" fill="#d9dbdc" stroke="#4a5257" stroke-width="1"/>
<path d="M1196,737.600 h9.800 M1200.900,732.600 v10" stroke="#222b30" stroke-width="2" fill="none"/>
<rect x="877.800" y="105.4" width="2" height="2" fill="#222b30"/><rect x="877.800" y="109.2" width="2" height="2" fill="#222b30"/><rect x="877.800" y="113" width="2" height="2" fill="#222b30"/><rect x="877.800" y="116.8" width="2" height="2" fill="#222b30"/>
<path d="M1192.300,109.500 l5.400,5.400 M1197.700,109.500 l-5.400,5.400" stroke="#39454b" fill="none" stroke-width="1.5" />
<path d="M882.400,133.600 l4.300,4.600 l4.300,-4.600" stroke="#39454b" fill="none" stroke-width="1.5" />
<path d="M1184.500,141 v-8.500 h8.500 M1187,135 l5.500,5.500 M1192.800,136 v4.800 h-4.800" stroke="#39454b" fill="none" stroke-width="1.1" />
<path d="M1150,168 l4.200,4.400 l4.200,-4.400" stroke="#39454b" fill="none" stroke-width="1.5" />
<path d="M1150,207 l4.200,4.400 l4.200,-4.400" stroke="#39454b" fill="none" stroke-width="1.5" />
<path d="M1150,246 l4.200,4.400 l4.200,-4.400" stroke="#39454b" fill="none" stroke-width="1.5" />
<path d="M1150,320 l4.200,4.400 l4.200,-4.400" stroke="#39454b" fill="none" stroke-width="1.5" />
<path d="M1150,359 l4.200,4.400 l4.200,-4.400" stroke="#39454b" fill="none" stroke-width="1.5" />
<path d="M1223,112 h10 v2 h-10z M1223,116 h10 v2 h-10z M1223,120 h10 v2 h-10z" fill="#2c363b"/>
<g transform="translate(1218,145)" ><rect x="0.600" y="0.600" width="18.800" height="18.800" rx="1" fill="#fafafa" stroke="#3a3a38" stroke-width="1.200"/><rect x="1" y="1" width="18" height="3" fill="#6f6f6d"/><path d="M4,9.500 h12 M4,13.500 h12" stroke="#3a3a38" fill="none" stroke-width="1" /><circle cx="11.500" cy="9.500" r="1.400" fill="#1e8bcd"/><circle cx="8.500" cy="13.500" r="1.300" fill="#fafafa" stroke="#1e8bcd"/></g>
<path d="M1218.600,196.600 l5.400,-15 h0.800 l5.400,15 M1220.600,191.500 h8.400" stroke="#3a3a38" fill="none" stroke-width="1.4" />
<ellipse cx="1234.200" cy="192.600" rx="6.200" ry="1.900" fill="#fafafa" stroke="#3a3a38" stroke-width="1" transform="rotate(-50 1234.200 192.600)"/>
<path d="M1223.500,200.500 c2,-3.500 4.500,-4.500 7,-3.500 c0.500,2.500 -2.500,5 -7,3.500z" fill="#cfe3f5" stroke="#1c6fbe" stroke-width="1.100"/>
<g transform="translate(1217,217)" ><path d="M0.500,17.500 v-17 h6.500 l2.500,3 h10 v3.500" stroke="#ed8733" fill="#fafafa" stroke-width="1" /><path d="M0.500,17.500 l3.500,-11 h18.500 l-3.200,11z" stroke="#ed8733" fill="#f8db8f" stroke-width="1" /><rect x="8.600" y="7.600" width="12.800" height="11.800" fill="#fafafa" stroke="#3a3a38" stroke-width="1.200"/><circle cx="11.800" cy="10.800" r="1.100" fill="#f8db8f" stroke="#ed8733" stroke-width=".8"/><path d="M9.200,18.800 l4,-4 l2,2 l2.300,-3 l3.300,3.300 v1.700z" stroke="#1e78c8" fill="#86b8e8" stroke-width="0.8" /></g>
<circle cx="1228.100" cy="262.600" r="9.600" fill="#fafafa" stroke="#3a3a38" stroke-width="1.100"/><path d="M1233.600,257.100 L1230.600,265.100 L1222.600,268.100 L1225.600,260.100z" fill="#1e78c8"/><circle cx="1228.100" cy="262.600" r="1.300" fill="#fff"/>
<g transform="translate(1218,288.6)" ><circle cx="14" cy="6.300" r="5.600" fill="#fafafa" stroke="#3a3a38" stroke-width="1.100"/><rect x="0.600" y="6.600" width="11.500" height="10.800" fill="#fafafa" stroke="#3a3a38" stroke-width="1.100"/><path d="M13.500,6.200 L20,12.800 L13.500,19.400 L7,12.800z" stroke="#6a6a68" fill="#fafafa" stroke-width="1.1" /></g>
<path d="M715.400,356.600 l4,-4.600 l4,4.600" stroke="#39434a" fill="none" stroke-width="2.2" />
<path d="M738.600,349.600 l7.600,7.600 M746.200,349.600 l-7.600,7.600" stroke="#39434a" fill="none" stroke-width="2.3" />
<defs><linearGradient id="dA" x1="0" y1="0" x2="0" y2="1"><stop offset="0" stop-color="#f0421f"/><stop offset="1" stop-color="#ffb300"/></linearGradient><linearGradient id="dT" x1="0" y1="0" x2="1" y2="0"><stop offset="0" stop-color="#f0421f"/><stop offset="1" stop-color="#ffa700"/></linearGradient><linearGradient id="dL" x1="0" y1="0" x2="0" y2="1"><stop offset="0" stop-color="#2fb2e4"/><stop offset="1" stop-color="#b4e8f6"/></linearGradient><linearGradient id="dF" x1="0" y1="0" x2="0" y2="1"><stop offset="0" stop-color="#ffffff"/><stop offset="1" stop-color="#2f9bf0"/></linearGradient></defs><rect x="536" y="721.800" width="20.200" height="19.600" rx="2.200" fill="#4d6678"/><path d="M536,736.500 v-12.500 a2.200,2.200 0 0 1 2.200,-2.200 h15.800 a2.200,2.200 0 0 1 2.200,2.200 v12.500z" fill="#04a7dd"/><rect x="564" y="721.200" width="1.900" height="22.200" fill="#6c7073"/><rect x="573" y="720.700" width="22.200" height="1.600" fill="url(#dT)"/><rect x="572.900" y="722.900" width="22.400" height="19.400" rx="1.200" fill="#13202b" stroke="#626466" stroke-width="1.400"/><path d="M578,738.800 L584.200,726 L590.400,738.800" fill="none" stroke="url(#dA)" stroke-width="2.900" stroke-linejoin="round"/><path d="M584.200,731.200 c1.300,2 1.300,5.500 0,7.800 c-1.300,-2.300 -1.300,-5.800 0,-7.800z" fill="url(#dF)"/><rect x="604.700" y="720.700" width="18.800" height="22.600" rx="1.600" fill="#0fa9e1" stroke="#c4d4dc" stroke-width="1.400"/><rect x="605.400" y="730.800" width="17.400" height="1.200" fill="#0b6f98"/><rect x="611.400" y="725.200" width="5" height="2.200" fill="#bcc1c5"/><rect x="611.400" y="735.400" width="5" height="2.200" fill="#bcc1c5"/><circle cx="643.800" cy="731.900" r="11.700" fill="#10a4dc"/><path d="M643.800,720.200 a11.700,11.700 0 0 0 0,23.400z" fill="#35b4e6"/><path d="M646,727 c2,-2.500 5,-2 6.500,0 c-1,1 -3,0.500 -3.500,2 c-1.500,0.500 -2.500,-0.500 -3,-2z M646.500,732.500 c2,-1.500 5,-0.500 6,1.500 c-0.500,2.500 -2,4.500 -4,5.500 c-1.500,-2 -2.500,-4.500 -2,-7z M634,727.500 c1.500,-3 4,-5 7,-5.500 c0.500,2 -1,3.500 -3,4.500 c-1,1.500 -2.500,2 -4,1z" fill="#86d6f1"/><path d="M641.700,728.400 V743.200 L638.700,739.800 L636.200,743.800 L634,742.500 L636.500,738.700 L632.300,738.500z" fill="#f4f6f7"/><rect x="662.100" y="719.900" width="23.900" height="24" rx="2.600" fill="#d3d7da"/><path d="M676.600,734.600 L682.200,740.200" stroke="#1d2a33" stroke-width="2.800" stroke-linecap="round"/><path d="M675.600,733.600 L677.400,735.400" stroke="#e8b21c" stroke-width="2.600"/><circle cx="671.500" cy="729.300" r="6.100" fill="url(#dL)" stroke="#15191c" stroke-width="1.300"/><rect x="692.100" y="721.200" width="1.900" height="22.200" fill="#6c7073"/><path d="M704.400,727.200 v-2.600 a1.600,1.600 0 0 1 1.600,-1.600 h3.600 l1.400,1.300 h8.600 v3z" fill="#f1f4f8"/><rect x="701.900" y="726.800" width="20.200" height="13.600" rx="1.200" fill="#6aa3e6"/>
</svg>
<span id="t0" class="t " style="left:505.59px;top:8.25px;font-size:12.4px;line-height:16px;font-weight:700;color:#c3c5c7;letter-spacing:0.148px;">Untitled 2 — LibreOffice Draw</span>
<span id="t1" class="t " style="left:10.78px;top:36.25px;font-size:13.8px;line-height:17px;font-weight:400;color:#cfd3d5;letter-spacing:-0.456px;">File</span>
<span id="t2" class="t " style="left:47.48px;top:36.25px;font-size:13.8px;line-height:17px;font-weight:400;color:#cfd3d5;letter-spacing:-0.206px;">Edit</span>
<span id="t3" class="t " style="left:86.83px;top:36.25px;font-size:13.8px;line-height:17px;font-weight:400;color:#cfd3d5;letter-spacing:-0.510px;">View</span>
<span id="t4" class="t " style="left:130.52px;top:36.25px;font-size:13.8px;line-height:17px;font-weight:400;color:#cfd3d5;letter-spacing:0.765px;">Insert</span>
<span id="t5" class="t " style="left:184.28px;top:36.25px;font-size:13.8px;line-height:17px;font-weight:400;color:#cfd3d5;letter-spacing:0.392px;">Format</span>
<span id="t6" class="t " style="left:245.58px;top:36.25px;font-size:13.8px;line-height:17px;font-weight:400;color:#cfd3d5;letter-spacing:-0.356px;">Page</span>
<span id="t7" class="t " style="left:292.36px;top:36.25px;font-size:13.8px;line-height:17px;font-weight:400;color:#cfd3d5;letter-spacing:-0.367px;">Shape</span>
<span id="t8" class="t " style="left:347.07px;top:36.25px;font-size:13.8px;line-height:17px;font-weight:400;color:#cfd3d5;letter-spacing:-0.240px;">Tools</span>
<span id="t9" class="t " style="left:394.29px;top:36.25px;font-size:13.8px;line-height:17px;font-weight:400;color:#cfd3d5;letter-spacing:0.007px;">Window</span>
<span id="t10" class="t " style="left:458.38px;top:36.25px;font-size:13.8px;line-height:17px;font-weight:400;color:#cfd3d5;letter-spacing:0.443px;">Help</span>
<span id="t11" class="t " style="left:54.00px;top:109.25px;font-size:13.8px;line-height:17px;font-weight:700;color:#27333a;letter-spacing:-0.425px;">Pages</span>
<span id="t12" class="t " style="left:75.64px;top:146.25px;font-size:13.8px;line-height:17px;font-weight:700;color:#4b5356;letter-spacing:0.000px;">1</span>
<span id="t13" class="t " style="left:357.80px;top:704.25px;font-size:12.4px;line-height:16px;font-weight:700;color:#27333a;letter-spacing:0.428px;">Layout</span>
<span id="t14" class="t " style="left:425.39px;top:704.25px;font-size:12.4px;line-height:16px;font-weight:400;color:#38434a;letter-spacing:0.208px;">Controls</span>
<span id="t15" class="t " style="left:503.20px;top:704.25px;font-size:12.4px;line-height:16px;font-weight:400;color:#38434a;letter-spacing:0.115px;">Dimension Lines</span>
<span id="t16" class="t " style="left:14.00px;top:730.25px;font-size:12.4px;line-height:16px;font-weight:700;color:#27333a;letter-spacing:-0.080px;">Page 1 of 1</span>
<span id="t17" class="t " style="left:425.20px;top:730.25px;font-size:12.4px;line-height:16px;font-weight:700;color:#27333a;letter-spacing:0.744px;">Default</span>
<span id="t18" class="t " style="left:812.36px;top:732.25px;font-size:12.4px;line-height:16px;font-weight:700;color:#27333a;letter-spacing:0.023px;">0.00 x 0.00</span>
<span id="t19" class="t " style="left:970.05px;top:730.25px;font-size:12.4px;line-height:16px;font-weight:700;color:#27333a;letter-spacing:-0.035px;">1:1</span>
<span id="t20" class="t " style="left:1220.51px;top:730.25px;font-size:12.4px;line-height:16px;font-weight:700;color:#27333a;letter-spacing:0.628px;">49%</span>
<span id="t21" class="t " style="left:886.50px;top:105.25px;font-size:13.8px;line-height:17px;font-weight:700;color:#27333a;letter-spacing:0.118px;">Properties</span>
<span id="t22" class="t " style="left:1180.47px;top:106.25px;font-size:12.5px;line-height:16px;font-weight:700;color:#39454b;letter-spacing:0.000px;">?</span>
<span id="t23" class="t " style="left:898.60px;top:129.25px;font-size:13.8px;line-height:17px;font-weight:700;color:#27333a;letter-spacing:-0.206px;">Page</span>
<span id="t24" class="t " style="left:942.58px;top:164.25px;font-size:13.8px;line-height:17px;font-weight:400;color:#38434a;letter-spacing:0.374px;">Format:</span>
<span id="t25" class="t " style="left:1003.37px;top:164.25px;font-size:13.8px;line-height:17px;font-weight:400;color:#38434a;letter-spacing:-0.448px;">A4</span>
<span id="t26" class="t " style="left:916.74px;top:203.25px;font-size:13.8px;line-height:17px;font-weight:400;color:#38434a;letter-spacing:0.405px;">Orientation:</span>
<span id="t27" class="t " style="left:1002.48px;top:203.25px;font-size:13.8px;line-height:17px;font-weight:400;color:#38434a;letter-spacing:0.723px;">Portrait</span>
<span id="t28" class="t " style="left:913.18px;top:242.25px;font-size:13.8px;line-height:17px;font-weight:400;color:#38434a;letter-spacing:0.164px;">Background:</span>
<span id="t29" class="t " style="left:1002.48px;top:242.25px;font-size:13.8px;line-height:17px;font-weight:400;color:#38434a;letter-spacing:0.403px;">None</span>
<span id="t30" class="t " style="left:944.58px;top:316.25px;font-size:13.8px;line-height:17px;font-weight:400;color:#38434a;letter-spacing:0.281px;">Margin:</span>
<span id="t31" class="t " style="left:1002.48px;top:316.25px;font-size:13.8px;line-height:17px;font-weight:400;color:#38434a;letter-spacing:0.382px;">Normal (1.90 cm)</span>
<span id="t32" class="t " style="left:909.68px;top:355.25px;font-size:13.8px;line-height:17px;font-weight:400;color:#38434a;letter-spacing:0.053px;">Master Page:</span>
<span id="t33" class="t " style="left:1002.48px;top:355.25px;font-size:13.8px;line-height:17px;font-weight:400;color:#38434a;letter-spacing:0.747px;">Default</span>
<span id="t34" class="t " style="left:1032.00px;top:279.25px;font-size:13.8px;line-height:17px;font-weight:700;color:#27333a;letter-spacing:0.429px;">Insert Image...</span>
<span id="t35" class="t " style="left:550.00px;top:374.25px;font-size:13.8px;line-height:17px;font-weight:400;color:#dfe1e2;letter-spacing:-0.067px;">General Error.</span>
<span id="t36" class="t " style="left:550.00px;top:393.25px;font-size:13.8px;line-height:17px;font-weight:400;color:#dfe1e2;letter-spacing:0.264px;">General input/output error.</span>
<span id="t37" class="t " style="left:623.82px;top:444.25px;font-size:13.8px;line-height:17px;font-weight:700;color:#6fb6ae;letter-spacing:-0.058px;">OK</span>
<svg style="position:absolute;left:912px;top:620px" width="24" height="32" viewBox="912 620 24 32"><path d="M917.300,625 V643.500 L921.300,639.800 L924.100,646 L927,644.700 L924.200,638.600 L929.900,638.100z" fill="#000" stroke="#fff" stroke-width="1.100" stroke-linejoin="round"/></svg>
</div>
</div></body></html>
